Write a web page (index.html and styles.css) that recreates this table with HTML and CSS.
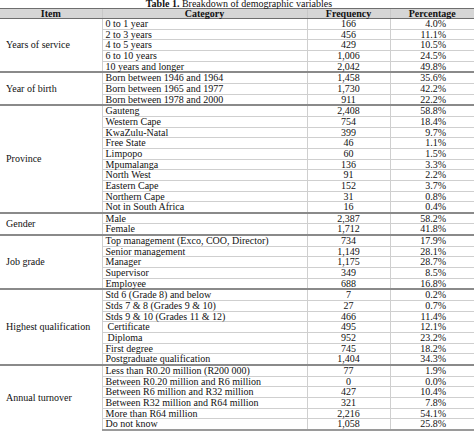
FILE: index.html
```html
<!DOCTYPE html>
<html>
<head>
<meta charset="utf-8">
<link rel="stylesheet" href="styles.css">
</head>
<body>
<div class="title"><b>Table 1.</b> Breakdown of demographic variables</div>
<table class="tbl">
<colgroup><col class="c-item"><col class="c-cat"><col class="c-freq"><col class="c-pct"></colgroup>
<thead>
<tr><th>Item</th><th>Category</th><th>Frequency</th><th>Percentage</th></tr>
</thead>
<tbody class="grp">
<tr><td class="item" rowspan="5">Years of service</td><td class="cat">0 to 1 year</td><td class="freq">166</td><td class="pct">4.0%</td></tr>
<tr><td class="cat">2 to 3 years</td><td class="freq">456</td><td class="pct">11.1%</td></tr>
<tr><td class="cat">4 to 5 years</td><td class="freq">429</td><td class="pct">10.5%</td></tr>
<tr><td class="cat">6 to 10 years</td><td class="freq">1,006</td><td class="pct">24.5%</td></tr>
<tr><td class="cat">10 years and longer</td><td class="freq">2,042</td><td class="pct">49.8%</td></tr>
</tbody>
<tbody class="grp">
<tr><td class="item" rowspan="3">Year of birth</td><td class="cat">Born between 1946 and 1964</td><td class="freq">1,458</td><td class="pct">35.6%</td></tr>
<tr><td class="cat">Born between 1965 and 1977</td><td class="freq">1,730</td><td class="pct">42.2%</td></tr>
<tr><td class="cat">Born between 1978 and 2000</td><td class="freq">911</td><td class="pct">22.2%</td></tr>
</tbody>
<tbody class="grp">
<tr><td class="item" rowspan="10">Province</td><td class="cat">Gauteng</td><td class="freq">2,408</td><td class="pct">58.8%</td></tr>
<tr><td class="cat">Western Cape</td><td class="freq">754</td><td class="pct">18.4%</td></tr>
<tr><td class="cat">KwaZulu-Natal</td><td class="freq">399</td><td class="pct">9.7%</td></tr>
<tr><td class="cat">Free State</td><td class="freq">46</td><td class="pct">1.1%</td></tr>
<tr><td class="cat">Limpopo</td><td class="freq">60</td><td class="pct">1.5%</td></tr>
<tr><td class="cat">Mpumalanga</td><td class="freq">136</td><td class="pct">3.3%</td></tr>
<tr><td class="cat">North West</td><td class="freq">91</td><td class="pct">2.2%</td></tr>
<tr><td class="cat">Eastern Cape</td><td class="freq">152</td><td class="pct">3.7%</td></tr>
<tr><td class="cat">Northern Cape</td><td class="freq">31</td><td class="pct">0.8%</td></tr>
<tr><td class="cat">Not in South Africa</td><td class="freq">16</td><td class="pct">0.4%</td></tr>
</tbody>
<tbody class="grp">
<tr><td class="item" rowspan="2">Gender</td><td class="cat">Male</td><td class="freq">2,387</td><td class="pct">58.2%</td></tr>
<tr><td class="cat">Female</td><td class="freq">1,712</td><td class="pct">41.8%</td></tr>
</tbody>
<tbody class="grp">
<tr><td class="item" rowspan="5">Job grade</td><td class="cat">Top management (Exco, COO, Director)</td><td class="freq">734</td><td class="pct">17.9%</td></tr>
<tr><td class="cat">Senior management</td><td class="freq">1,149</td><td class="pct">28.1%</td></tr>
<tr><td class="cat">Manager</td><td class="freq">1,175</td><td class="pct">28.7%</td></tr>
<tr><td class="cat">Supervisor</td><td class="freq">349</td><td class="pct">8.5%</td></tr>
<tr><td class="cat">Employee</td><td class="freq">688</td><td class="pct">16.8%</td></tr>
</tbody>
<tbody class="grp">
<tr><td class="item" rowspan="7">Highest qualification</td><td class="cat">Std 6 (Grade 8) and below</td><td class="freq">7</td><td class="pct">0.2%</td></tr>
<tr><td class="cat">Stds 7 &amp; 8 (Grades 9 &amp; 10)</td><td class="freq">27</td><td class="pct">0.7%</td></tr>
<tr><td class="cat">Stds 9 &amp; 10 (Grades 11 &amp; 12)</td><td class="freq">466</td><td class="pct">11.4%</td></tr>
<tr><td class="cat indent">Certificate</td><td class="freq">495</td><td class="pct">12.1%</td></tr>
<tr><td class="cat indent">Diploma</td><td class="freq">952</td><td class="pct">23.2%</td></tr>
<tr><td class="cat">First degree</td><td class="freq">745</td><td class="pct">18.2%</td></tr>
<tr><td class="cat">Postgraduate qualification</td><td class="freq">1,404</td><td class="pct">34.3%</td></tr>
</tbody>
<tbody class="grp last">
<tr><td class="item" rowspan="6">Annual turnover</td><td class="cat">Less than R0.20 million (R200 000)</td><td class="freq">77</td><td class="pct">1.9%</td></tr>
<tr><td class="cat">Between R0.20 million and R6 million</td><td class="freq">0</td><td class="pct">0.0%</td></tr>
<tr><td class="cat">Between R6 million and R32 million</td><td class="freq">427</td><td class="pct">10.4%</td></tr>
<tr><td class="cat">Between R32 million and R64 million</td><td class="freq">321</td><td class="pct">7.8%</td></tr>
<tr><td class="cat">More than R64 million</td><td class="freq">2,216</td><td class="pct">54.1%</td></tr>
<tr><td class="cat">Do not know</td><td class="freq">1,058</td><td class="pct">25.8%</td></tr>
</tbody>
</table>
</body>
</html>
```
FILE: styles.css
```css
html, body {
  margin: 0;
  padding: 0;
  background: #fff;
}
body {
  font-family: "Liberation Serif", "Times New Roman", serif;
  font-size: 10px;
  color: #111;
  width: 474px;
  overflow: hidden;
}
.title {
  height: 8px;
  line-height: 8px;
  text-align: center;
  white-space: nowrap;
  padding-left: 4px;
}
.tbl {
  width: 474px;
  border-collapse: collapse;
  table-layout: fixed;
}
.c-item { width: 102px; }
.c-cat { width: 205px; }
.c-freq { width: 83px; }
.c-pct { width: 84px; }
.tbl th {
  background: #d6d6d6;
  font-weight: bold;
  height: 9px;
  line-height: 9px;
  padding: 0;
  text-align: center;
  border-top: 1px solid #6e6e6e;
  border-bottom: 1px solid #6e6e6e;
  border-left: 1px solid #c8c8c8;
}
.tbl th:first-child { border-left: none; }
.tbl td {
  height: 9.66px;
  line-height: 9.66px;
  padding: 0;
  white-space: nowrap;
  border-top: 1px solid #cfcfcf;
  border-left: 1px solid #cfcfcf;
  vertical-align: middle;
}
.tbl td.item {
  border-left: none;
  padding-left: 6px;
  text-align: left;
}
.tbl td.cat { padding-left: 3px; }
.tbl td.cat.indent { padding-left: 5px; }
.tbl td.freq { text-align: center; }
.tbl td.pct { text-align: right; padding-right: 28px; }
.tbl tbody.grp tr:first-child td {
  border-top: 2px solid #8a8a8a;
}
.tbl thead + tbody.grp tr:first-child td {
  border-top: 1px solid #6e6e6e;
}
.tbl tbody.last tr:last-child td {
  border-bottom: 2px solid #9a9a9a;
}
```
